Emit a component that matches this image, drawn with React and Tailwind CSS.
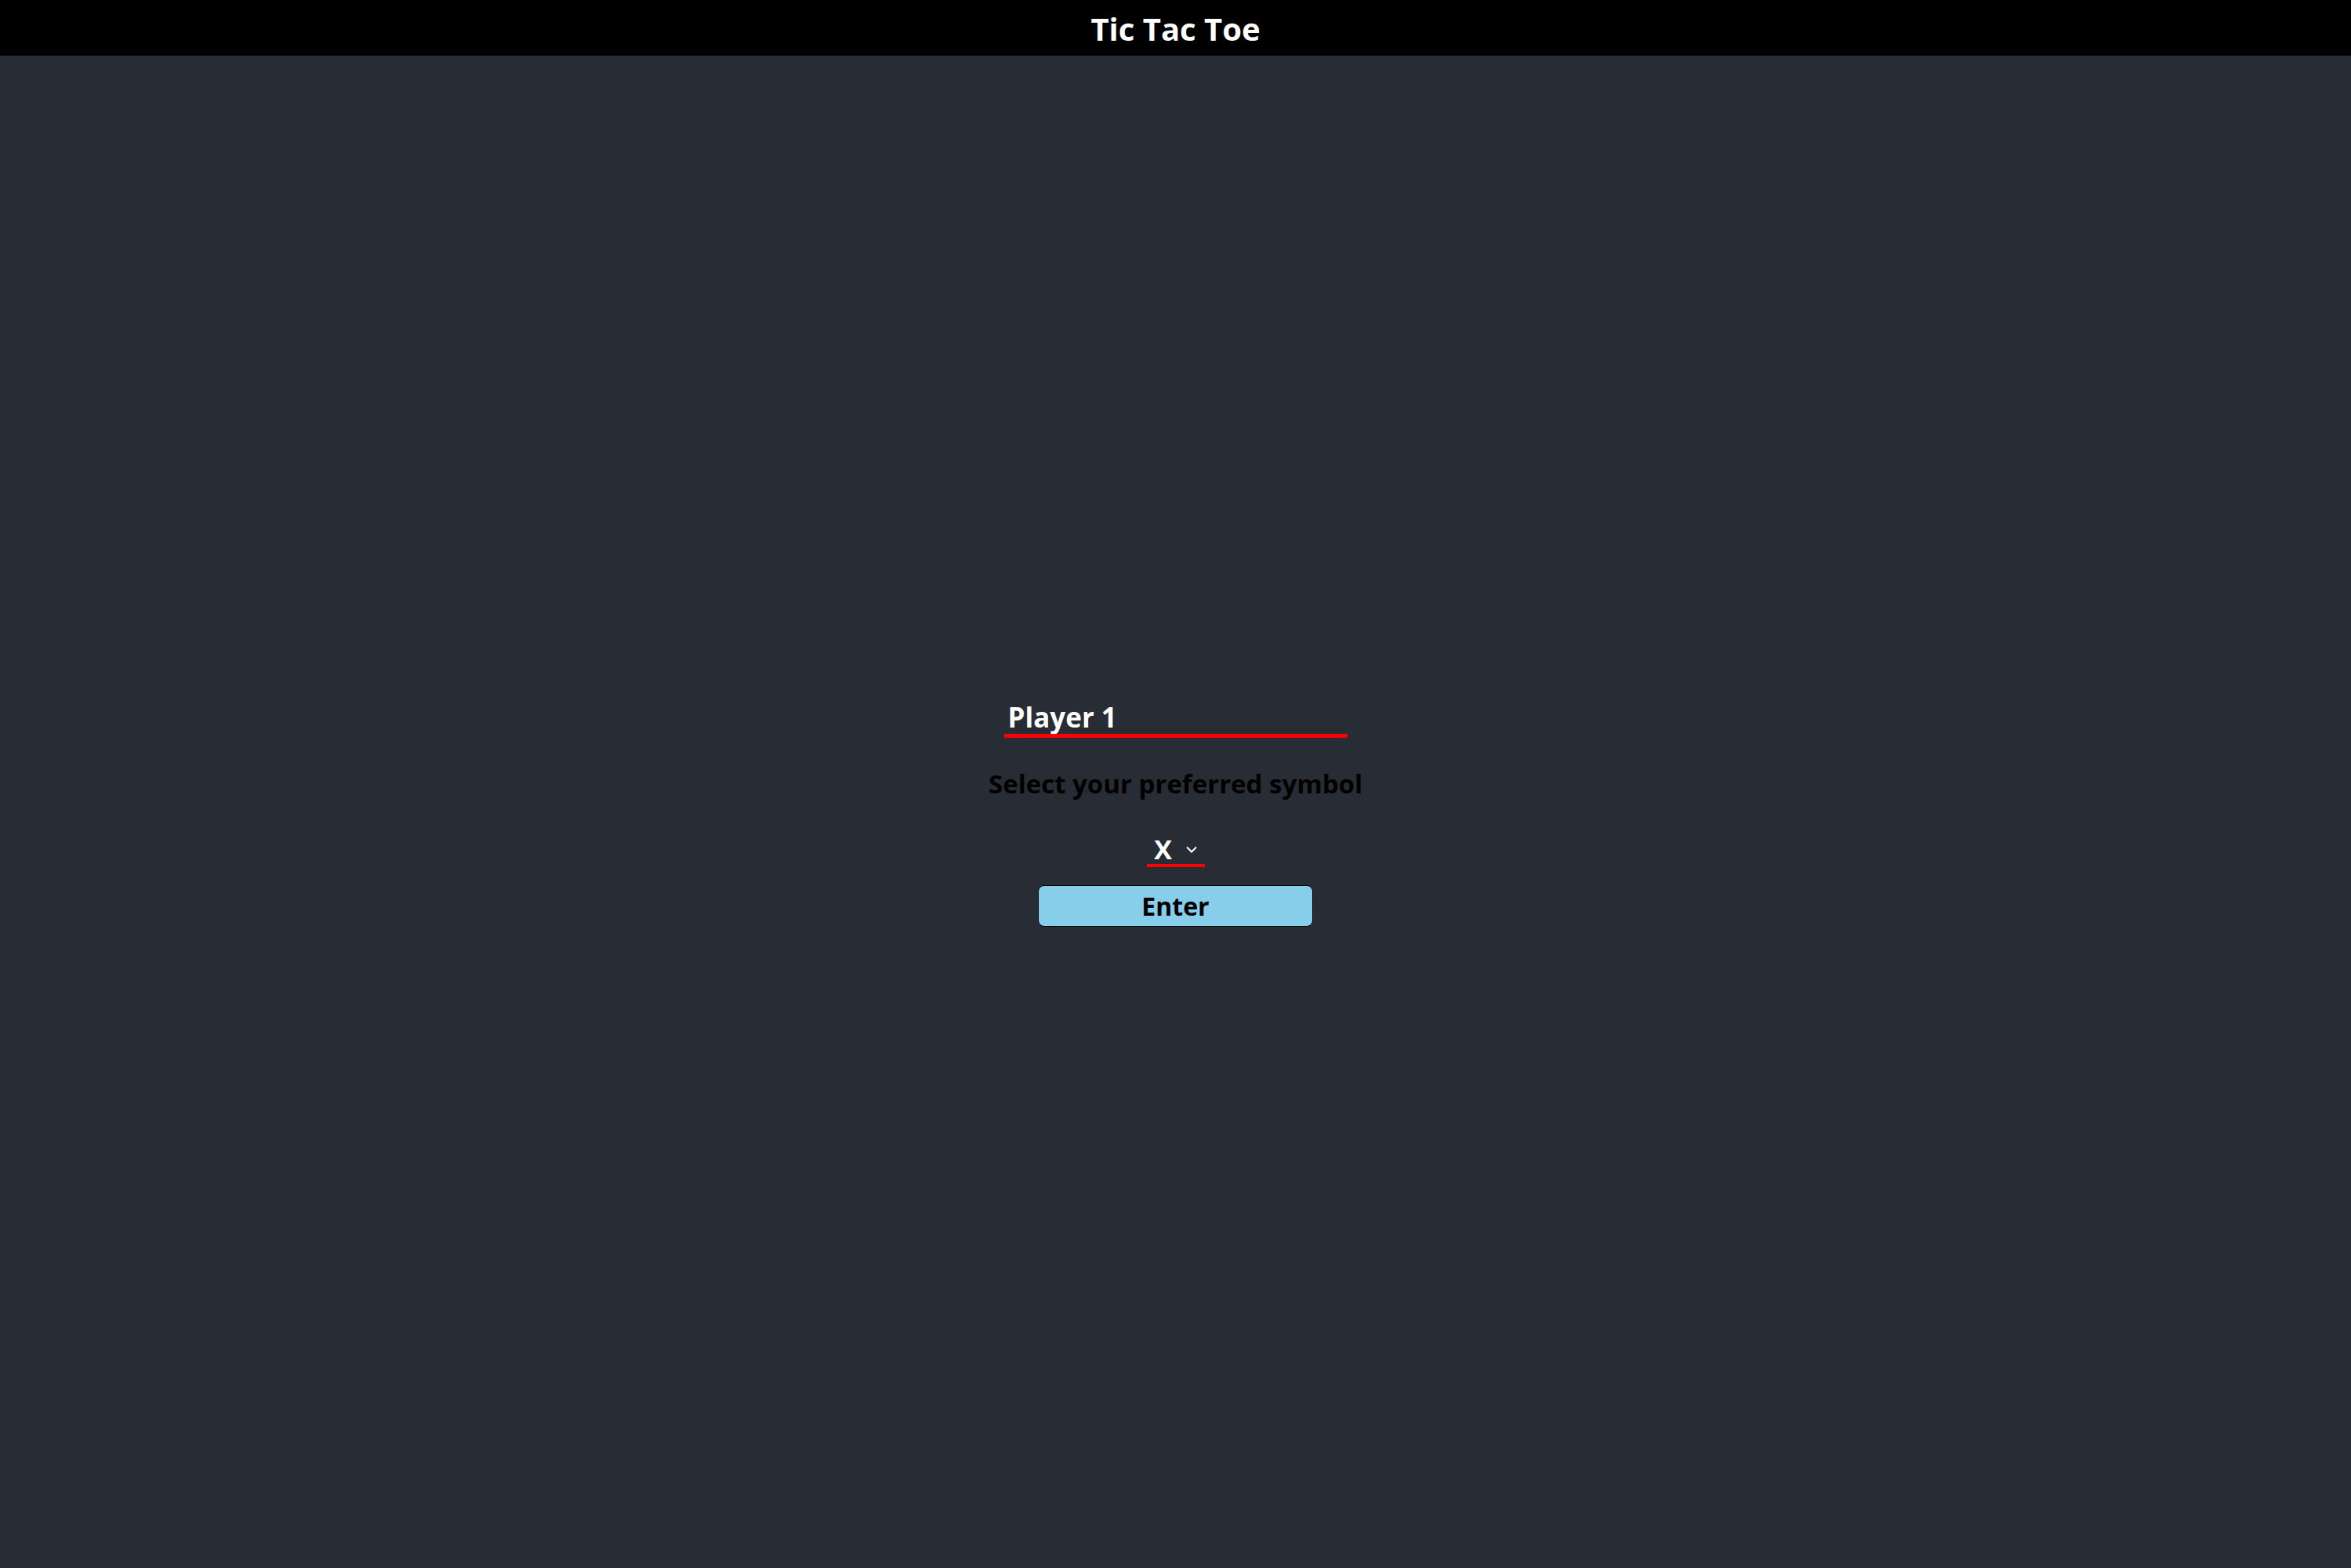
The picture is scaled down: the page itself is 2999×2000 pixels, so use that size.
import React from "react";

export default function App() {
	const [name, setName] = React.useState("Player 1");
	const [symbol] = React.useState("X");

	return (
		<div className="min-h-screen flex flex-col bg-[#282c34] font-['Open_Sans',sans-serif]">
			{/* Header */}
			<header className="h-[71px] bg-black flex items-center justify-center">
				<h1 className="text-[40px] font-bold text-white leading-none pt-[3px]">Tic Tac Toe</h1>
			</header>

			{/* Setup form */}
			<main className="h-[1929px] flex flex-col items-center pt-[824px]">
				<input
					type="text"
					value={name}
					onChange={(e) => setName(e.target.value)}
					className="w-[438px] h-[46px] bg-transparent border-b-[5px] border-[#ff0000] px-[5px] text-[35px] font-bold text-white outline-none"
				/>
				<p className="mt-[36px] text-[33px] font-bold text-black leading-[1.4]">Select your preferred symbol</p>
				<div className="mt-[43px] flex items-center gap-[18px] w-[74px] justify-center border-b-[4px] border-[#ff0000] pb-[2px]">
					<span className="text-[34px] font-bold text-white leading-none">{symbol}</span>
					<svg width="14" height="9" viewBox="0 0 14 9" fill="none" stroke="white" strokeWidth="2">
						<path d="M1 1.5l6 6 6-6" />
					</svg>
				</div>
				<button className="mt-[23px] w-[351px] h-[53px] bg-[#87ceeb] border border-black rounded-[8px] text-[32px] font-bold text-black leading-none">
					Enter
				</button>
			</main>
		</div>
	);
}
